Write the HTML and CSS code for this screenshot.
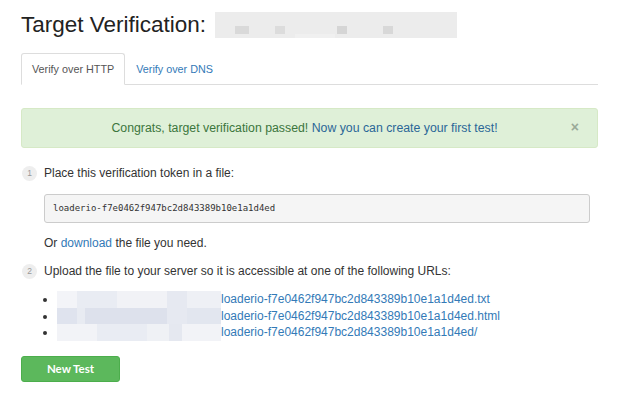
FILE: index.html
```html
<!DOCTYPE html>
<html>
<head>
<meta charset="utf-8">
<link rel="stylesheet" href="styles.css">
</head>
<body>
<div class="page">
  <h1 class="title">Target Verification: <span class="blur blur-title"></span></h1>
  <ul class="tabs">
    <li class="tab active">Verify over HTTP</li>
    <li class="tab"><a href="#">Verify over DNS</a></li>
  </ul>
  <div class="alert">
    <span class="alert-text">Congrats, target verification passed! <a href="#">Now you can create your first test!</a></span>
    <span class="close">×</span>
  </div>
  <div class="step">
    <span class="num">1</span>
    <span class="step-text">Place this verification token in a file:</span>
  </div>
  <div class="indent">
    <pre class="code">loaderio-f7e0462f947bc2d843389b10e1a1d4ed</pre>
    <p class="or">Or <a href="#">download</a> the file you need.</p>
  </div>
  <div class="step step2">
    <span class="num">2</span>
    <span class="step-text">Upload the file to your server so it is accessible at one of the following URLs:</span>
  </div>
  <ul class="urls">
    <li><span class="blur blur-url b1"></span><a href="#">loaderio-f7e0462f947bc2d843389b10e1a1d4ed.txt</a></li>
    <li><span class="blur blur-url b2"></span><a href="#">loaderio-f7e0462f947bc2d843389b10e1a1d4ed.html</a></li>
    <li><span class="blur blur-url b3"></span><a href="#">loaderio-f7e0462f947bc2d843389b10e1a1d4ed/</a></li>
  </ul>
  <button class="btn">New Test</button>
</div>
</body>
</html>
```
FILE: styles.css
```css
* { box-sizing: border-box; }
body {
  margin: 0;
  background: #fff;
  font-family: "Liberation Sans", Arial, sans-serif;
  color: #333;
  font-size: 12px;
}
a { color: #337ab7; text-decoration: none; }
.page { padding: 10px 22px 0 21px; }
.title {
  margin: 0;
  font-weight: normal;
  font-size: 22.5px;
  line-height: 30px;
  color: #222;
  display: flex;
  align-items: center;
  gap: 9px;
}
.blur-title {
  display: inline-block;
  width: 242px;
  height: 26px;
  background:
    linear-gradient(90deg, transparent 0 20px, #d9d9d9 20px 34px, transparent 34px 60px, #dcdcdc 60px 70px, transparent 70px 122px, #d5d5d5 122px 132px, transparent 132px 168px, #d8d8d8 168px 178px, transparent 178px) 0 14px / 100% 8px no-repeat,
    linear-gradient(#f0f0f0, #f0f0f0) 80px 22px / 40px 4px no-repeat,
    #ececec;
}
.tabs {
  list-style: none;
  margin: 13px 0 0;
  padding: 0;
  display: flex;
  border-bottom: 1px solid #ddd;
  height: 32px;
  font-size: 10.8px;
}
.tab {
  padding: 0 10px;
  display: flex;
  align-items: center;
  height: 32px;
  white-space: nowrap;
  border: 1px solid transparent;
  border-radius: 3px 3px 0 0;
}
.tab.active {
  border-color: #ddd;
  border-bottom-color: #fff;
  background: #fff;
  color: #555;
}
.tab a { color: #337ab7; }
.alert {
  margin-top: 23px;
  height: 40px;
  background: #dff0d8;
  border: 1px solid #d6e9c6;
  border-radius: 3px;
  color: #3c763d;
  display: flex;
  align-items: center;
  justify-content: center;
  position: relative;
  font-size: 12.3px;
}
.alert a { color: #2b6797; }
.alert-text { margin-left: -10px; }
.close {
  position: absolute;
  right: 18px;
  top: 10px;
  color: #9aaa98;
  font-size: 14px;
  font-weight: bold;
}
.step {
  display: flex;
  align-items: center;
  gap: 7px;
  margin-top: 17px;
  height: 16px;
}
.step2 { margin-top: 12px; }
.num {
  width: 15px;
  height: 15px;
  border-radius: 50%;
  background: #eee;
  color: #999;
  font-size: 8.5px;
  display: flex;
  align-items: center;
  justify-content: center;
  margin-left: 1px;
}
.indent { padding-left: 23px; }
.code {
  margin: 13px 0 0;
  width: 546px;
  height: 29px;
  background: #f5f5f5;
  border: 1px solid #ccc;
  border-radius: 3px;
  font-family: "DejaVu Sans Mono", monospace;
  font-size: 9px;
  line-height: 27px;
  padding: 0 8px;
  color: #333;
}
.or { margin: 12px 0 0; line-height: 16px; }
.urls {
  margin: 12px 0 0;
  padding: 0 0 0 36px;
  list-style: disc;
  line-height: 16.5px;
}
.blur-url {
  display: inline-block;
  width: 164px;
  height: 16.5px;
  vertical-align: top;
  background: #eef0f5;
}
.b1 {
  background:
    linear-gradient(90deg, #f3f4f8 0 20px, #e9ecf3 20px 60px, #f1f2f6 60px 110px, #e6e9f1 110px 130px, #eef0f5 130px);
}
.b2 {
  background:
    linear-gradient(90deg, #dfe3ee 0 20px, #e8ebf2 20px 28px, #dde1ec 28px 110px, #e6e9f1 110px 130px, #e2e6ef 130px);
}
.b3 {
  background:
    linear-gradient(90deg, #f2f3f7 0 40px, #e9ecf3 40px 90px, #eff1f5 90px 112px, #e5e8f0 112px 125px, #f2f3f7 125px);
}
.btn {
  margin-top: 15px;
  width: 99px;
  height: 26px;
  border: 1px solid #4cae4c;
  background: #5cb85c;
  color: #fff;
  border-radius: 3px;
  font-family: Lato, "Liberation Sans", sans-serif;
  font-size: 11.5px;
  font-weight: bold;
  cursor: pointer;
}
```
